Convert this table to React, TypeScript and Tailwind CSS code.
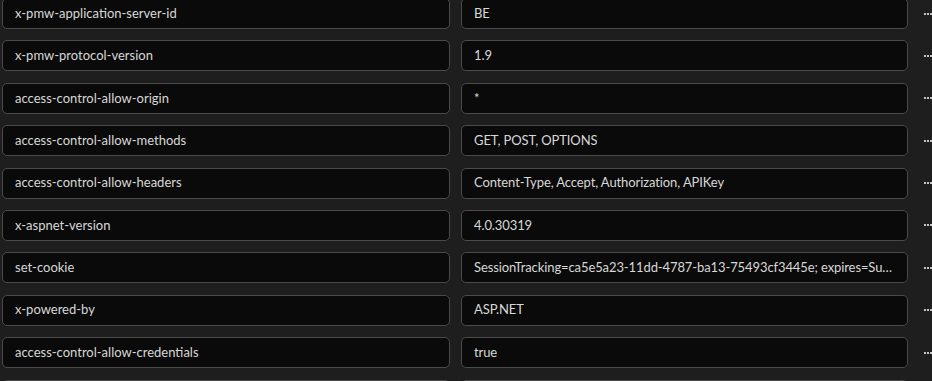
import React from 'react';

const headers: [string, string][] = [
  ['x-pmw-application-server-id', 'BE'],
  ['x-pmw-protocol-version', '1.9'],
  ['access-control-allow-origin', '*'],
  ['access-control-allow-methods', 'GET, POST, OPTIONS'],
  ['access-control-allow-headers', 'Content-Type, Accept, Authorization, APIKey'],
  ['x-aspnet-version', '4.0.30319'],
  ['set-cookie', 'SessionTracking=ca5e5a23-11dd-4787-ba13-75493cf3445e; expires=Sun, 18-Oct-2026 10:12:44 GMT; path=/; HttpOnly'],
  ['x-powered-by', 'ASP.NET'],
  ['access-control-allow-credentials', 'true'],
  // next row peeks in at the bottom edge, its text is below the fold
  ['', ''],
];

const HeaderRow = ({ name, value }: { name: string; value: string }) => (
  <div className="flex items-center h-[31px] shrink-0">
    <div className="w-[449px] h-full ml-[2px] flex items-center px-3 bg-[#0a0a0a] border border-[#4a4a4a] rounded-[5px] text-[#d8d8d8] min-w-0">
      <span className="truncate">{name}</span>
    </div>
    <div className="w-[448px] h-full ml-[11px] flex items-center px-3 bg-[#0a0a0a] border border-[#4a4a4a] rounded-[5px] text-[#d8d8d8] min-w-0">
      <span className="truncate tracking-[-0.1px]">{value}</span>
    </div>
    <div className="ml-[16px] flex items-center">
      <span className="w-[2px] h-[2px] bg-[#c4c4c4]" />
      <span className="w-[2px] h-[2px] bg-[#c4c4c4] ml-[1px]" />
      <span className="w-[2px] h-[2px] bg-[#c4c4c4] ml-[1px]" />
    </div>
  </div>
);

export default function App() {
  return (
    <div
      className="w-[932px] h-[381px] overflow-hidden bg-[#1e1e1e] text-[13px]"
      style={{ fontFamily: 'Lato, "Noto Sans", sans-serif' }}
    >
      <div className="flex flex-col gap-[11.4px] mt-[-2px]">
        {headers.map(([n, v], i) => (
          <HeaderRow key={i} name={n} value={v} />
        ))}
      </div>
    </div>
  );
}
